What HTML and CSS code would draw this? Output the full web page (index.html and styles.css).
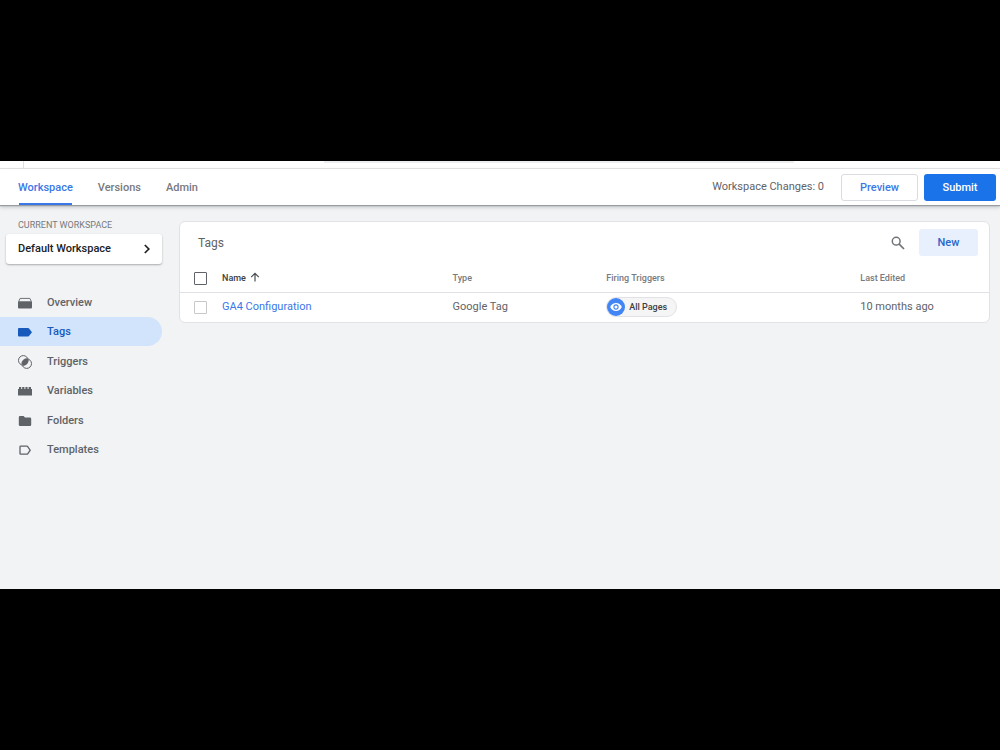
FILE: index.html
```html
<!DOCTYPE html>
<html lang="en">
<head>
<meta charset="utf-8">
<meta name="viewport" content="width=device-width, initial-scale=1">
<title>Tags</title>
<link rel="stylesheet" href="styles.css">
</head>
<body>
<div class="app">
  <div class="account-bar"><div class="account-side"></div><div class="search-edge"></div></div>
  <header class="topbar">
    <nav class="tabs">
      <a class="tab tab-active" href="#">Workspace</a>
      <a class="tab" href="#">Versions</a>
      <a class="tab" href="#">Admin</a>
    </nav>
    <div class="actions">
      <span class="changes">Workspace Changes: 0</span>
      <button class="btn btn-outline" type="button">Preview</button>
      <button class="btn btn-primary" type="button">Submit</button>
    </div>
  </header>
  <div class="body">
    <aside class="sidebar">
      <div class="label">CURRENT WORKSPACE</div>
      <button class="picker" type="button">Default Workspace
        <svg width="8" height="10" viewBox="0 0 8 10" fill="none" stroke="#202124" stroke-width="1.7"><path d="M1.8 1l4 4-4 4"/></svg>
      </button>
      <nav class="menu">
        <a class="item" href="#"><svg class="icon" viewBox="0 0 14 14"><path d="M0 5.200h14v6.400a1 1 0 0 1-1 1H1a1 1 0 0 1-1-1z"/><path d="M.9 5l1.200-2.600h9.800L13.100 5" fill="none" stroke="currentColor" stroke-width=".9"/></svg>Overview</a>
        <a class="item item-active" href="#"><svg class="icon" viewBox="0 0 14 14"><path d="M1 3h9.200a1 1 0 0 1 .8.400L14 7.200 11 11a1 1 0 0 1-.8.400H1a1 1 0 0 1-1-1V4a1 1 0 0 1 1-1z"/></svg>Tags</a>
        <a class="item" href="#"><svg class="icon" viewBox="0 0 14 14"><g fill="none" stroke="currentColor"><circle cx="5.300" cy="5.400" r="4.800"/><circle cx="8.700" cy="8.600" r="4.800"/></g><path d="M3.900 8.600a4.800 4.800 0 0 1 6.200-4.600 4.800 4.800 0 0 1-5 6.400 4.800 4.800 0 0 1-1.200-1.800z"/></svg>Triggers</a>
        <a class="item" href="#"><svg class="icon" viewBox="0 0 14 14"><path d="M0 11.500V5h1V3h2.200v2h1V3h2.200v2h1V3h2.200v2h1V3H13v2h1v6.500z"/></svg>Variables</a>
        <a class="item" href="#"><svg class="icon" viewBox="0 0 14 14"><path d="M2 2h3.600L7 3.500h5a1.200 1.200 0 0 1 1.200 1.200v6.100A1.200 1.200 0 0 1 12 12H2a1.200 1.200 0 0 1-1.200-1.200V3.200A1.200 1.200 0 0 1 2 2z"/></svg>Folders</a>
        <a class="item" href="#"><svg class="icon" viewBox="0 0 14 14"><path d="M2.700 3.200h6.200a1 1 0 0 1 .8.400l2.500 3.600-2.500 3.600a1 1 0 0 1-.8.400H2.700a.7.700 0 0 1-.7-.7V3.900a.7.700 0 0 1 .7-.7z" fill="none" stroke="currentColor" stroke-width="1.300"/></svg>Templates</a>
      </nav>
    </aside>
    <main class="card">
      <div class="card-head">
        <h1 class="title">Tags</h1>
        <button class="search" type="button" aria-label="Search">
          <svg width="14" height="14" viewBox="0 0 14 14" fill="none" stroke="#707479" stroke-width="1.500"><circle cx="5.200" cy="5.200" r="3.900"/><path d="M8.200 8.200l4.800 4.800" stroke-width="1.700"/></svg>
        </button>
        <button class="btn btn-tonal" type="button">New</button>
      </div>
      <table class="table">
        <colgroup><col class="col-check"><col class="col-name"><col class="col-type"><col class="col-trigger"><col class="col-edited"></colgroup>
        <thead>
          <tr>
            <th class="check-cell"><input class="check" type="checkbox" aria-label="Select all"></th>
            <th class="sorted">Name <svg class="arrow" width="10" height="10" viewBox="0 0 10 10" fill="none" stroke="#4a4d51" stroke-width="1.200"><path d="M5 9.500V1.500M1.200 5.100L5 1.300l3.800 3.800"/></svg></th>
            <th>Type</th><th>Firing Triggers</th><th>Last Edited</th>
          </tr>
        </thead>
        <tbody>
          <tr>
            <td class="check-cell"><input class="check check-light" type="checkbox" aria-label="Select GA4 Configuration"></td>
            <td><a class="link" href="#">GA4 Configuration</a></td>
            <td>Google Tag</td>
            <td><span class="chip"><svg width="18" height="18" viewBox="0 0 18 18"><circle cx="9" cy="9" r="9" fill="#4285f4"/><path d="M3.200 9C4.400 6.300 6.500 5 9 5s4.600 1.300 5.800 4c-1.200 2.700-3.300 4-5.800 4S4.400 11.700 3.200 9z" fill="#fff"/><circle cx="9" cy="9" r="2.100" fill="#fff" stroke="#4285f4" stroke-width="1.100"/></svg>All Pages</span></td>
            <td>10 months ago</td>
          </tr>
        </tbody>
      </table>
    </main>
  </div>
</div>
</body>
</html>
```
FILE: styles.css
```css
* { box-sizing: border-box; }
body {
  margin: 0;
  min-height: 100vh;
  padding: 161px 0;
  display: flex;
  background: #000;
  color: #5f6368;
  font: 11px/16px Roboto, "Liberation Sans", sans-serif;
}
a { color: inherit; text-decoration: none; }
button { font: inherit; border: 0; cursor: pointer; }
.app {
  flex: 1;
  min-width: 0;
  display: flex;
  flex-direction: column;
  background: #f1f3f4;
}
.account-bar {
  display: grid;
  grid-template-columns: 24px 30% 47% 1fr;
  height: 8px;
  background: #fff;
  border-bottom: 1px solid #e2e4e6;
}
.account-side { border-right: 1px solid #e0e0e0; }
.search-edge { grid-column: 3; height: 2px; background: #eceef0; }
.topbar {
  display: flex;
  justify-content: space-between;
  height: 36px;
  padding: 0 4px 0 18px;
  background: #fff;
  box-shadow: 0 1px 1px #9a9d9f, 0 2px 4px #bdbfc1;
}
.tabs { display: flex; gap: 25px; font-weight: 500; }
.tab { padding-top: 11px; color: #777a7e; }
.tab-active {
  color: #3b78e7;
  background: linear-gradient(#3b78e7, #3b78e7) center bottom / calc(100% - 2px) 2px no-repeat;
}
.actions { display: flex; align-items: center; gap: 6px; }
.changes { margin-right: 11px; }
.btn {
  height: 27px;
  padding: 1px 0 0;
  border-radius: 3px;
  font: 500 11px/16px Roboto, sans-serif;
}
.btn-outline { width: 77px; background: #fff; border: 1px solid #dadce0; color: #3b78e7; }
.btn-primary { width: 72px; background: #1a73e8; color: #fff; }
.btn-tonal { width: 59px; background: #e8f0fe; color: #2a66c8; }
.body {
  flex: 1;
  display: grid;
  grid-template-columns: 163px minmax(0, 1fr);
  column-gap: 16px;
  align-items: start;
  padding: 12px 10px 12px 0;
}
.label { padding-left: 18px; font-size: 9px; line-height: 17px; color: #777a7e; }
.picker {
  display: flex;
  align-items: center;
  justify-content: space-between;
  width: 156px;
  height: 30px;
  margin-left: 6px;
  padding: 0 11px 0 12px;
  border-radius: 3px;
  background: #fff;
  color: #202124;
  font-weight: 500;
  box-shadow: 0 1px 2px #a9abad;
}
.menu {
  display: grid;
  grid-template-rows: repeat(6, 1fr);
  height: 177px;
  margin-top: 23px;
  font-weight: 500;
}
.item {
  display: flex;
  align-items: center;
  gap: 15px;
  padding: 2px 0 0 18px;
  margin-right: 1px;
  border-radius: 0 15px 15px 0;
}
.item-active { background: #d2e3fc; color: #185abc; }
.icon { width: 14px; height: 14px; fill: currentColor; }
.card {
  margin-top: 4px;
  background: #fff;
  border: 1px solid #e0e2e5;
  border-radius: 6px;
  overflow: hidden;
}
.card-head { display: flex; align-items: center; height: 41px; padding: 0 11px 0 18px; }
.title { margin: 0 auto 0 0; font-size: 12px; font-weight: 400; }
.search { display: flex; padding: 0; margin-right: 14px; background: none; }
.table { width: 100%; table-layout: fixed; border-collapse: collapse; }
.col-check { width: 42px; }
.col-name { width: 28.5%; }
.col-type { width: 19%; }
.col-trigger { width: 31.4%; }
th, td { height: 30px; padding: 0; text-align: left; }
th { height: 29px; padding-top: 2px; font-size: 9px; font-weight: 500; color: #777a7e; border-bottom: 1px solid #dfe1e4; }
.sorted { color: #3c4043; }
.arrow { margin-left: 2px; vertical-align: -1px; }
.check-cell { padding-left: 14px; }
.check {
  appearance: none;
  display: block;
  width: 13px;
  height: 13px;
  margin: 0;
  border: 1px solid #5f6368;
  border-radius: 1px;
}
.check-light { border-color: #c6c8ca; }
.link { color: #3b78e7; }
.chip {
  display: flex;
  width: fit-content;
  align-items: center;
  gap: 4px;
  height: 20px;
  padding: 0 9px 0 0;
  border: 1px solid #e0e2e5;
  border-radius: 10px;
  background: #f5f5f6;
  color: #3c4043;
  font-size: 9px;
  font-weight: 500;
}
```
